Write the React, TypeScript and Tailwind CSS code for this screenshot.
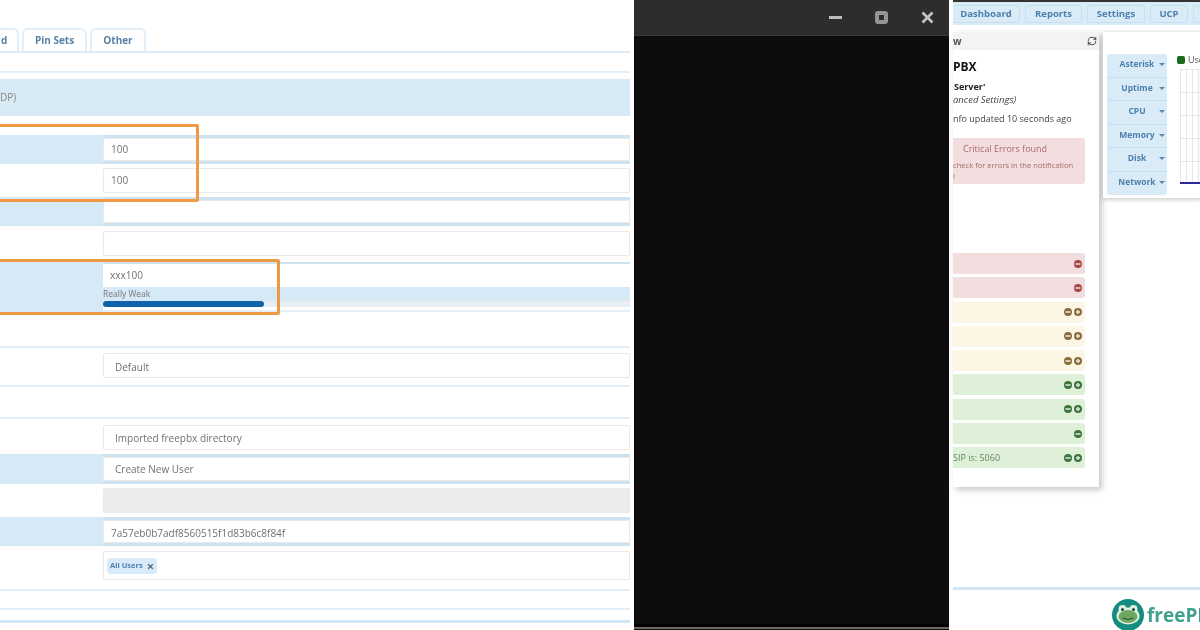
import type { ReactNode } from "react";
import { RefreshCw } from "lucide-react";

const font = "font-['Open_Sans',sans-serif]";

function Line({ className }: { className: string }) {
  return <div className={`h-[2px] bg-[#e3eff8] ${className}`} />;
}

function FormRow({
  blue,
  top,
  inputHeight,
  children,
  disabled,
}: {
  blue?: boolean;
  top: string;
  inputHeight: string;
  children?: ReactNode;
  disabled?: boolean;
}) {
  return (
    <div className={`flex ${top}`}>
      <div className={`w-[103px] shrink-0 ${blue ? "bg-[#d6e9f6]" : ""}`} />
      <div className={`flex-1 ${blue ? "border-t-[3px] border-b-[3px] border-[#cfe2f0]" : ""}`}>
        <div
          className={`${inputHeight} flex items-center rounded-[2px] border border-[#e9e9e9] px-[7px] pt-[1px] text-[10px] text-[#707070] ${
            disabled ? "bg-[#ececec]" : "bg-white"
          }`}
        >
          {children}
        </div>
      </div>
    </div>
  );
}

function LeftPanel() {
  return (
    <div className="relative h-[630px] w-[634px] shrink-0 overflow-hidden bg-white pr-[4px] blur-[0.6px]">
      {/* tabs */}
      <div className="mt-[28px] flex h-[25px] gap-[3px] border-b-2 border-[#dcebf6] text-[10px] font-bold text-[#5a82a8]">
        <div className="flex w-[19px] items-center justify-start rounded-tr-[6px] border-r-2 border-t-2 border-[#e3eff8] pl-[1px]">d</div>
        <div className="flex w-[65px] items-center justify-center rounded-t-[6px] border-x-2 border-t-2 border-[#e3eff8]">Pin Sets</div>
        <div className="flex w-[56px] items-center justify-center rounded-t-[6px] border-x-2 border-t-2 border-[#e3eff8]">Other</div>
      </div>
      <Line className="mt-[18px]" />
      <div className="mt-[6px] flex h-[37px] items-center bg-[#d8eaf6] text-[10px] text-[#888]">DP)</div>

      <FormRow blue top="mt-[19px]" inputHeight="h-[23px]"><span className="-mt-[2px]">100</span></FormRow>
      <FormRow top="mt-[4px]" inputHeight="h-[25px]"><span className="-mt-[2px]">100</span></FormRow>
      <FormRow blue top="mt-[4px]" inputHeight="h-[23px]" />
      <FormRow top="mt-[5px]" inputHeight="h-[25px]" />

      {/* password row with strength meter */}
      <div className="mt-[6px] flex h-[50px]">
        <div className="w-[103px] shrink-0 bg-[#d6e9f6]" />
        <div className="flex h-full flex-1 flex-col border-t-[2px] border-b-[2px] border-t-[#cfe2f0] border-b-[#e3eff8]">
          <div className="flex h-[23px] items-center bg-white px-[7px] text-[10px] text-[#707070]">xxx100</div>
          <div className="h-[14px] bg-[#d6e9f6] text-[8.5px] leading-[14px] text-[#777]">Really Weak</div>
          <div className="h-[6px] bg-[#e9eef2]">
            <div className="h-[6px] w-[161px] rounded-[3px] bg-[#0f63ab]" />
          </div>
        </div>
      </div>

      <Line className="mt-[34px]" />
      <FormRow top="mt-[5px]" inputHeight="h-[25px]">
        <span className="px-[4px] pt-[2px]">Default</span>
      </FormRow>
      <Line className="mt-[7px]" />
      <Line className="mt-[30px]" />
      <FormRow top="mt-[6px]" inputHeight="h-[25px]">
        <span className="px-[4px]">Imported freepbx directory</span>
      </FormRow>
      <FormRow blue top="mt-[4px]" inputHeight="h-[24px]">
        <span className="px-[4px]">Create New User</span>
      </FormRow>
      <FormRow top="mt-[4px]" inputHeight="h-[25px]" disabled />
      <FormRow blue top="mt-[4px]" inputHeight="h-[23px]">
        <span className="pt-[2px] text-[10px]">7a57eb0b7adf8560515f1d83b6c8f84f</span>
      </FormRow>
      <FormRow top="mt-[5px]" inputHeight="h-[29px]">
        <span className="-ml-[4px] flex h-[16px] items-center gap-[4px] rounded-[4px] bg-[#d9ebf8] px-[3px] text-[7.5px] font-bold text-[#4a80b5]">
          All Users <span className="text-[13px] leading-none text-[#5b6b7b]">×</span>
        </span>
      </FormRow>
      <Line className="mt-[9px]" />
      <Line className="mt-[17px]" />
      <div className="mt-[10px] h-[3px] bg-[#d3e6f4]" />

      {/* orange highlight boxes */}
      <div className="absolute -left-[5px] top-[124px] h-[78px] w-[204px] rounded-[2px] border-[3px] border-[#ee9a45]" />
      <div className="absolute -left-[5px] top-[259px] h-[56px] w-[285px] rounded-[2px] border-[3px] border-[#ee9a45]" />
    </div>
  );
}

function WindowBar() {
  return (
    <div className="h-[630px] w-[315px] shrink-0 bg-[#0d0d0d]">
      <div className="flex h-[36px] items-center justify-end gap-[33px] border-b border-[#3a3a3a] bg-[#2d2d2d] pr-[15px] blur-[0.7px]">
        <svg width="13" height="13" viewBox="0 0 13 13"><rect x="0" y="5" width="13" height="3" fill="#bdbdbd" /></svg>
        <svg width="13" height="13" viewBox="0 0 13 13"><rect x="2" y="2" width="9" height="9" rx="1" fill="none" stroke="#959595" strokeWidth="4" /></svg>
        <svg width="13" height="13" viewBox="0 0 13 13"><path d="M1.5 1.5 11.5 11.5M11.5 1.5 1.5 11.5" stroke="#c4c4c4" strokeWidth="2.6" /></svg>
      </div>
      <div className="h-[588px]" />
      <div className="h-[3px] bg-black" />
      <div className="h-[2px] bg-[#6a6a6a]" />
    </div>
  );
}

function StatusRow({ tone, plus, children }: { tone: "red" | "amber" | "green"; plus?: boolean; children?: ReactNode }) {
  const bg = tone === "red" ? "bg-[#f2dede]" : tone === "amber" ? "bg-[#fcf6e4]" : "bg-[#dff0d8]";
  const fg = tone === "red" ? "#a94442" : tone === "amber" ? "#8a6d3b" : "#3c763d";
  return (
    <div className={`flex h-[21px] items-center justify-end gap-[2px] rounded-r-[3px] pr-[3px] text-[9px] ${bg}`}>
      {children && <span className="mr-auto text-[#5f8a5f]">{children}</span>}
      <svg width="8" height="8" viewBox="0 0 8 8"><circle cx="4" cy="4" r="4" fill={fg} /><rect x="1.5" y="3.2" width="5" height="1.6" fill="#fff" opacity="0.8" /></svg>
      {plus && (
        <svg width="8" height="8" viewBox="0 0 8 8"><circle cx="4" cy="4" r="4" fill={fg} /><path d="M2 4h4M4 2v4" stroke="#fff" strokeWidth="1.8" opacity="0.7" /></svg>
      )}
    </div>
  );
}

function NavTab({ children }: { children: string }) {
  return (
    <div className="flex h-[23.5px] items-center border-b border-[#c7dff0] pb-[1px] text-[8.5px] font-bold text-[#4d7fae] last:border-b-0">
      <span className="w-[50px] pl-[10px] text-center whitespace-nowrap">{children}</span>
      <span className="ml-[2px] h-0 w-0 border-x-[3px] border-t-[3px] border-x-transparent border-t-[#5a85ad]" />
    </div>
  );
}

function Logo() {
  return (
    <svg width="32" height="34" viewBox="0 0 32 34" className="shrink-0">
      <circle cx="16" cy="16" r="16" fill="#138d80" />
      <path d="M12 30l2 4 6-3z" fill="#138d80" />
      <circle cx="10.500" cy="10" r="4" fill="#e3efdf" />
      <circle cx="21.500" cy="10" r="4" fill="#e3efdf" />
      <ellipse cx="16" cy="17" rx="11.500" ry="8.500" fill="#e3efdf" />
      <ellipse cx="16" cy="17.500" rx="9.500" ry="6.500" fill="#6fa860" />
      <circle cx="10.500" cy="10.500" r="1.500" fill="#1a4d3a" />
      <circle cx="21.500" cy="10.500" r="1.500" fill="#1a4d3a" />
      <path d="M10.500 19q5.500 3 11 0" fill="none" stroke="#1a4d3a" strokeWidth="1" />
    </svg>
  );
}

function RightPanel() {
  return (
    <div className="h-[630px] flex-1 overflow-hidden bg-white pl-[4px] text-[9px] text-[#444] blur-[0.3px]">
      {/* top nav */}
      <div className="h-[2px] bg-[#333]" />
      <div className="flex h-[23px] items-center gap-[5px] bg-[#d9ebf7] pt-[1px] text-[9.5px] font-bold text-[#4d7fae]">
        <div className="flex h-[18px] w-[67px] shrink-0 items-center justify-center rounded-r-[3px] border border-l-0 border-[#c7dff0]">Dashboard</div>
        <div className="flex h-[18px] w-[57px] shrink-0 items-center justify-center rounded-[3px] border border-[#c7dff0]">Reports</div>
        <div className="flex h-[18px] w-[58px] shrink-0 items-center justify-center rounded-[3px] border border-[#c7dff0]">Settings</div>
        <div className="flex h-[18px] w-[38px] shrink-0 items-center justify-center rounded-[3px] border border-[#c7dff0]">UCP</div>
        <div className="h-[18px] w-[20px] shrink-0 rounded-l-[3px] border border-r-0 border-[#c7dff0]" />
      </div>

      <div className="mt-[7px] flex items-start gap-[4px]">
        {/* overview */}
        <div className="h-[455px] w-[146px] shrink-0 bg-white shadow-[3px_3px_6px_rgba(0,0,0,0.22)]">
          <div className="flex h-[18px] items-center justify-between bg-[#f3f3f3] pr-[2px] text-[10px] font-bold text-[#555]">
            <span>w</span>
            <RefreshCw size={10} strokeWidth={2.5} className="text-[#555]" />
          </div>
          <div className="mt-[8px] text-[12px] leading-[18px] font-bold text-[#111]">PBX</div>
          <div className="mt-[4px] pl-[1px] text-[9px] leading-[13px] font-bold text-[#222]">Server'</div>
          <div className="text-[9.5px] leading-[13px] text-[#444] italic">anced Settings)</div>
          <div className="mt-[6px] text-[9px] leading-[13px]">nfo updated 10 seconds ago</div>
          <div className="mt-[13px] h-[46px] w-[132px] rounded-r-[3px] bg-[#f2dede] pt-[4px] text-[#a86a68]">
            <div className="pl-[10px] text-[9px] leading-[13px]">Critical Errors found</div>
            <div className="mt-[5px] text-[7.6px] leading-[11px]">check for errors in the notification</div>
            <div className="text-[7.6px] leading-[11px]">l</div>
          </div>
          <div className="mt-[69px] flex w-[132px] flex-col gap-[3.3px]">
            <StatusRow tone="red" />
            <StatusRow tone="red" />
            <StatusRow tone="amber" plus />
            <StatusRow tone="amber" plus />
            <StatusRow tone="amber" plus />
            <StatusRow tone="green" plus />
            <StatusRow tone="green" plus />
            <StatusRow tone="green" />
            <StatusRow tone="green" plus>SIP is: 5060</StatusRow>
          </div>
        </div>

        {/* stats */}
        <div className="flex h-[166px] flex-1 gap-[13px] bg-white pl-[4px] pt-[22px] shadow-[0_1px_5px_rgba(0,0,0,0.25)]">
          <div className="h-[141px] w-[60px] shrink-0 rounded-[3px] bg-[#d9ebf7]">
            <NavTab>Asterisk</NavTab>
            <NavTab>Uptime</NavTab>
            <NavTab>CPU</NavTab>
            <NavTab>Memory</NavTab>
            <NavTab>Disk</NavTab>
            <NavTab>Network</NavTab>
          </div>
          <div className="flex-1">
            <div className="-ml-[3px] flex h-[12px] items-center gap-[3px] text-[9px] text-[#555]">
              <span className="h-[8px] w-[8px] shrink-0 rounded-[2px] bg-[#1b6b1b]" />
              Use
            </div>
            <div className="mt-[3px] flex h-[115px] border-b-2 border-[#2a2a9a] bg-[repeating-linear-gradient(to_bottom,#e6e6e6_0,#e6e6e6_1px,transparent_1px,transparent_23px)]">
              <div className="h-full w-full bg-[repeating-linear-gradient(to_right,#e6e6e6_0,#e6e6e6_1px,transparent_1px,transparent_6px)]" />
            </div>
          </div>
        </div>
      </div>

      {/* footer */}
      <div className="mt-[100px] h-[3px] bg-[#d3e6f4]" />
      <div className="mt-[9px] flex items-start gap-[3px] pl-[159px]">
        <Logo />
        <span className="mt-[3px] text-[19px] leading-[26px] font-bold whitespace-nowrap text-[#3fa08c]">freePBX</span>
      </div>
    </div>
  );
}

export default function App() {
  return (
    <div className={`flex h-[630px] w-[1200px] overflow-hidden bg-white ${font}`}>
      <LeftPanel />
      <WindowBar />
      <RightPanel />
    </div>
  );
}
